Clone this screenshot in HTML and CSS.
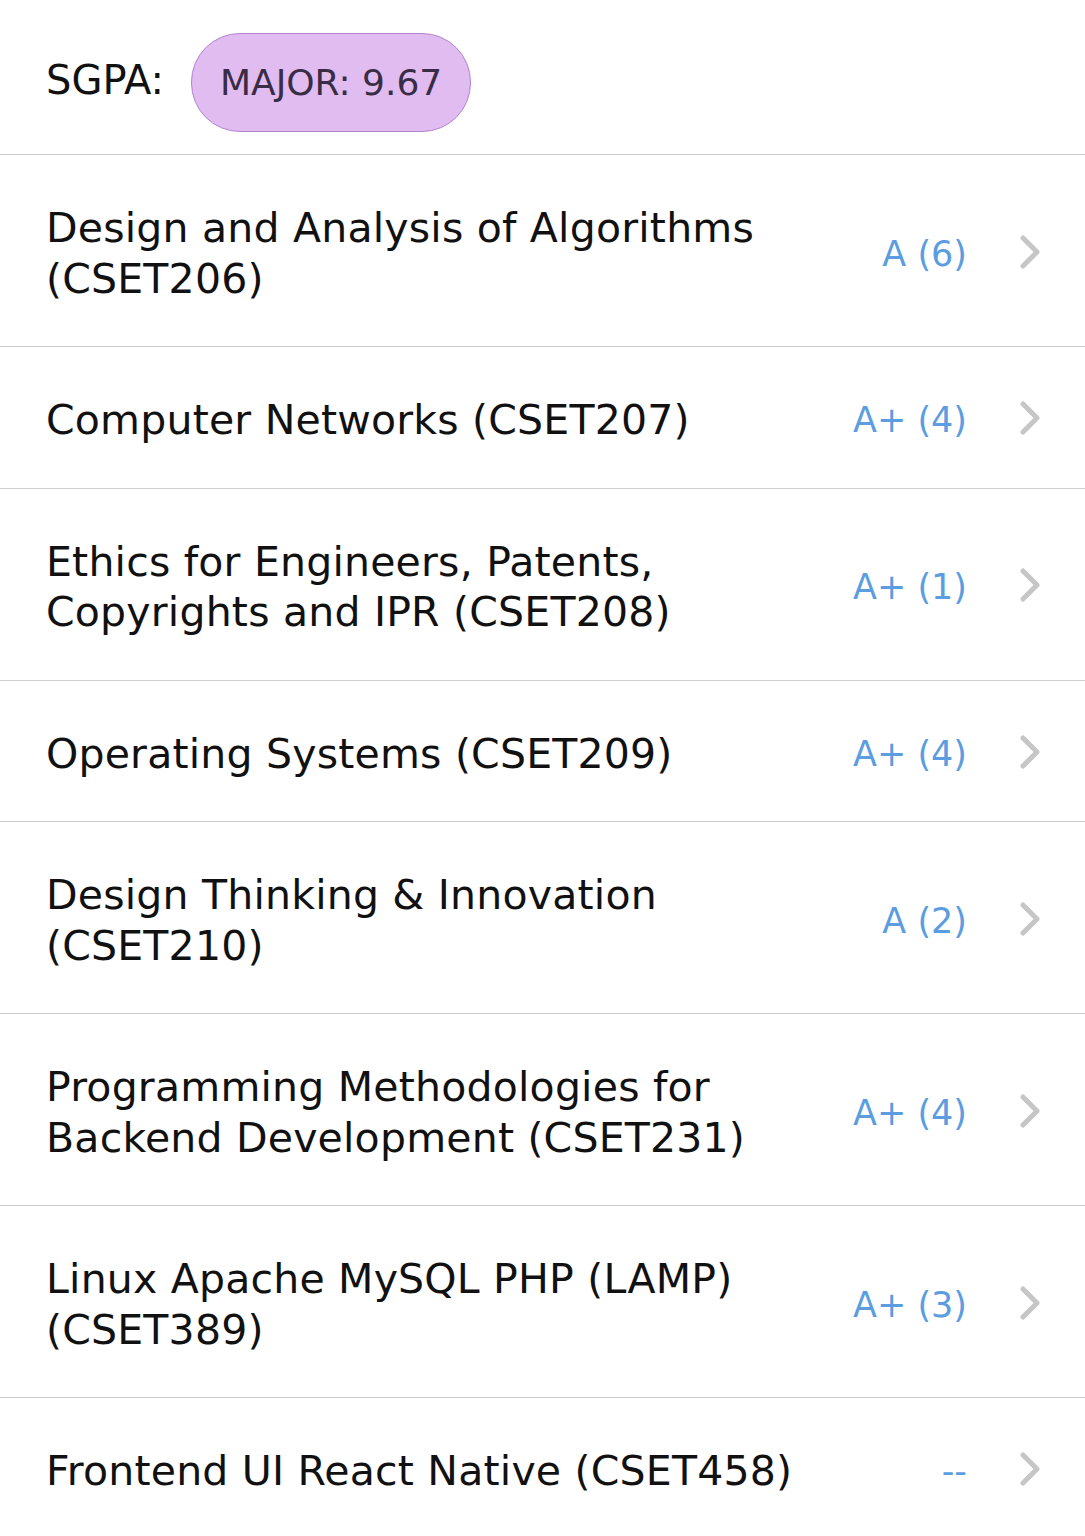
FILE: index.html
```html
<!DOCTYPE html>
<html lang="en">
<head>
  <meta charset="UTF-8">
  <meta name="viewport" content="width=device-width, initial-scale=1.0">
  <title>Semester Results</title>
  <link rel="stylesheet" href="styles.css">
</head>
<body>
  <div class="header">
    <span class="sgpa-label">SGPA:</span>
    <span class="pill">MAJOR: 9.67</span>
  </div>

  <ul class="courses">
    <li class="course">
      <div class="course-name">Design and Analysis of Algorithms (CSET206)</div>
      <div class="grade">A (6)</div>
      <span class="chevron"><svg viewBox="0 0 20 34" width="20" height="34"><path d="M3 3 L17 17 L3 31" /></svg></span>
    </li>
    <li class="course">
      <div class="course-name">Computer Networks (CSET207)</div>
      <div class="grade">A+ (4)</div>
      <span class="chevron"><svg viewBox="0 0 20 34" width="20" height="34"><path d="M3 3 L17 17 L3 31" /></svg></span>
    </li>
    <li class="course">
      <div class="course-name">Ethics for Engineers, Patents, Copyrights and IPR (CSET208)</div>
      <div class="grade">A+ (1)</div>
      <span class="chevron"><svg viewBox="0 0 20 34" width="20" height="34"><path d="M3 3 L17 17 L3 31" /></svg></span>
    </li>
    <li class="course">
      <div class="course-name">Operating Systems (CSET209)</div>
      <div class="grade">A+ (4)</div>
      <span class="chevron"><svg viewBox="0 0 20 34" width="20" height="34"><path d="M3 3 L17 17 L3 31" /></svg></span>
    </li>
    <li class="course">
      <div class="course-name">Design Thinking &amp; Innovation (CSET210)</div>
      <div class="grade">A (2)</div>
      <span class="chevron"><svg viewBox="0 0 20 34" width="20" height="34"><path d="M3 3 L17 17 L3 31" /></svg></span>
    </li>
    <li class="course">
      <div class="course-name">Programming Methodologies for Backend Development (CSET231)</div>
      <div class="grade">A+ (4)</div>
      <span class="chevron"><svg viewBox="0 0 20 34" width="20" height="34"><path d="M3 3 L17 17 L3 31" /></svg></span>
    </li>
    <li class="course">
      <div class="course-name">Linux Apache MySQL PHP (LAMP) (CSET389)</div>
      <div class="grade">A+ (3)</div>
      <span class="chevron"><svg viewBox="0 0 20 34" width="20" height="34"><path d="M3 3 L17 17 L3 31" /></svg></span>
    </li>
    <li class="course">
      <div class="course-name">Frontend UI React Native (CSET458)</div>
      <div class="grade">--</div>
      <span class="chevron"><svg viewBox="0 0 20 34" width="20" height="34"><path d="M3 3 L17 17 L3 31" /></svg></span>
    </li>
  </ul>
</body>
</html>
```

FILE: styles.css
```css
body {
  margin: 0;
  background-color: #ffffff;
  font-family: "DejaVu Sans", sans-serif;
  color: #111111;
}
.header {
  display: flex;
  align-items: center;
  padding: 33px 46px 22px 46px;
  border-bottom: 1px solid #cfcfcf;
}
.sgpa-label {
  font-size: 40px;
  margin-right: 27px;
  margin-top: -6px;
}
.pill {
  display: inline-flex;
  align-items: center;
  justify-content: center;
  width: 278px;
  height: 97px;
  border-radius: 49px;
  background-color: #e0bcf1;
  border: 1px solid #b283cf;
  color: #3a2c45;
  font-size: 36px;
}
.courses {
  list-style: none;
  margin: 0;
  padding: 0;
}
.course {
  display: flex;
  align-items: center;
  padding: 48px 45px 42px 46px;
  border-bottom: 1px solid #cfcfcf;
}
.course-name {
  flex: 1;
  font-size: 41px;
  letter-spacing: 0.2px;
  line-height: 50.5px;
  margin-right: 20px;
}
.grade {
  width: 140px;
  text-align: right;
  font-size: 35px;
  color: #5b9de0;
}
.chevron {
  display: flex;
  margin-left: 53px;
  margin-top: -4px;
}
.chevron path {
  fill: none;
  stroke: #c6c6c6;
  stroke-width: 5;
  stroke-linecap: round;
  stroke-linejoin: round;
}
```
